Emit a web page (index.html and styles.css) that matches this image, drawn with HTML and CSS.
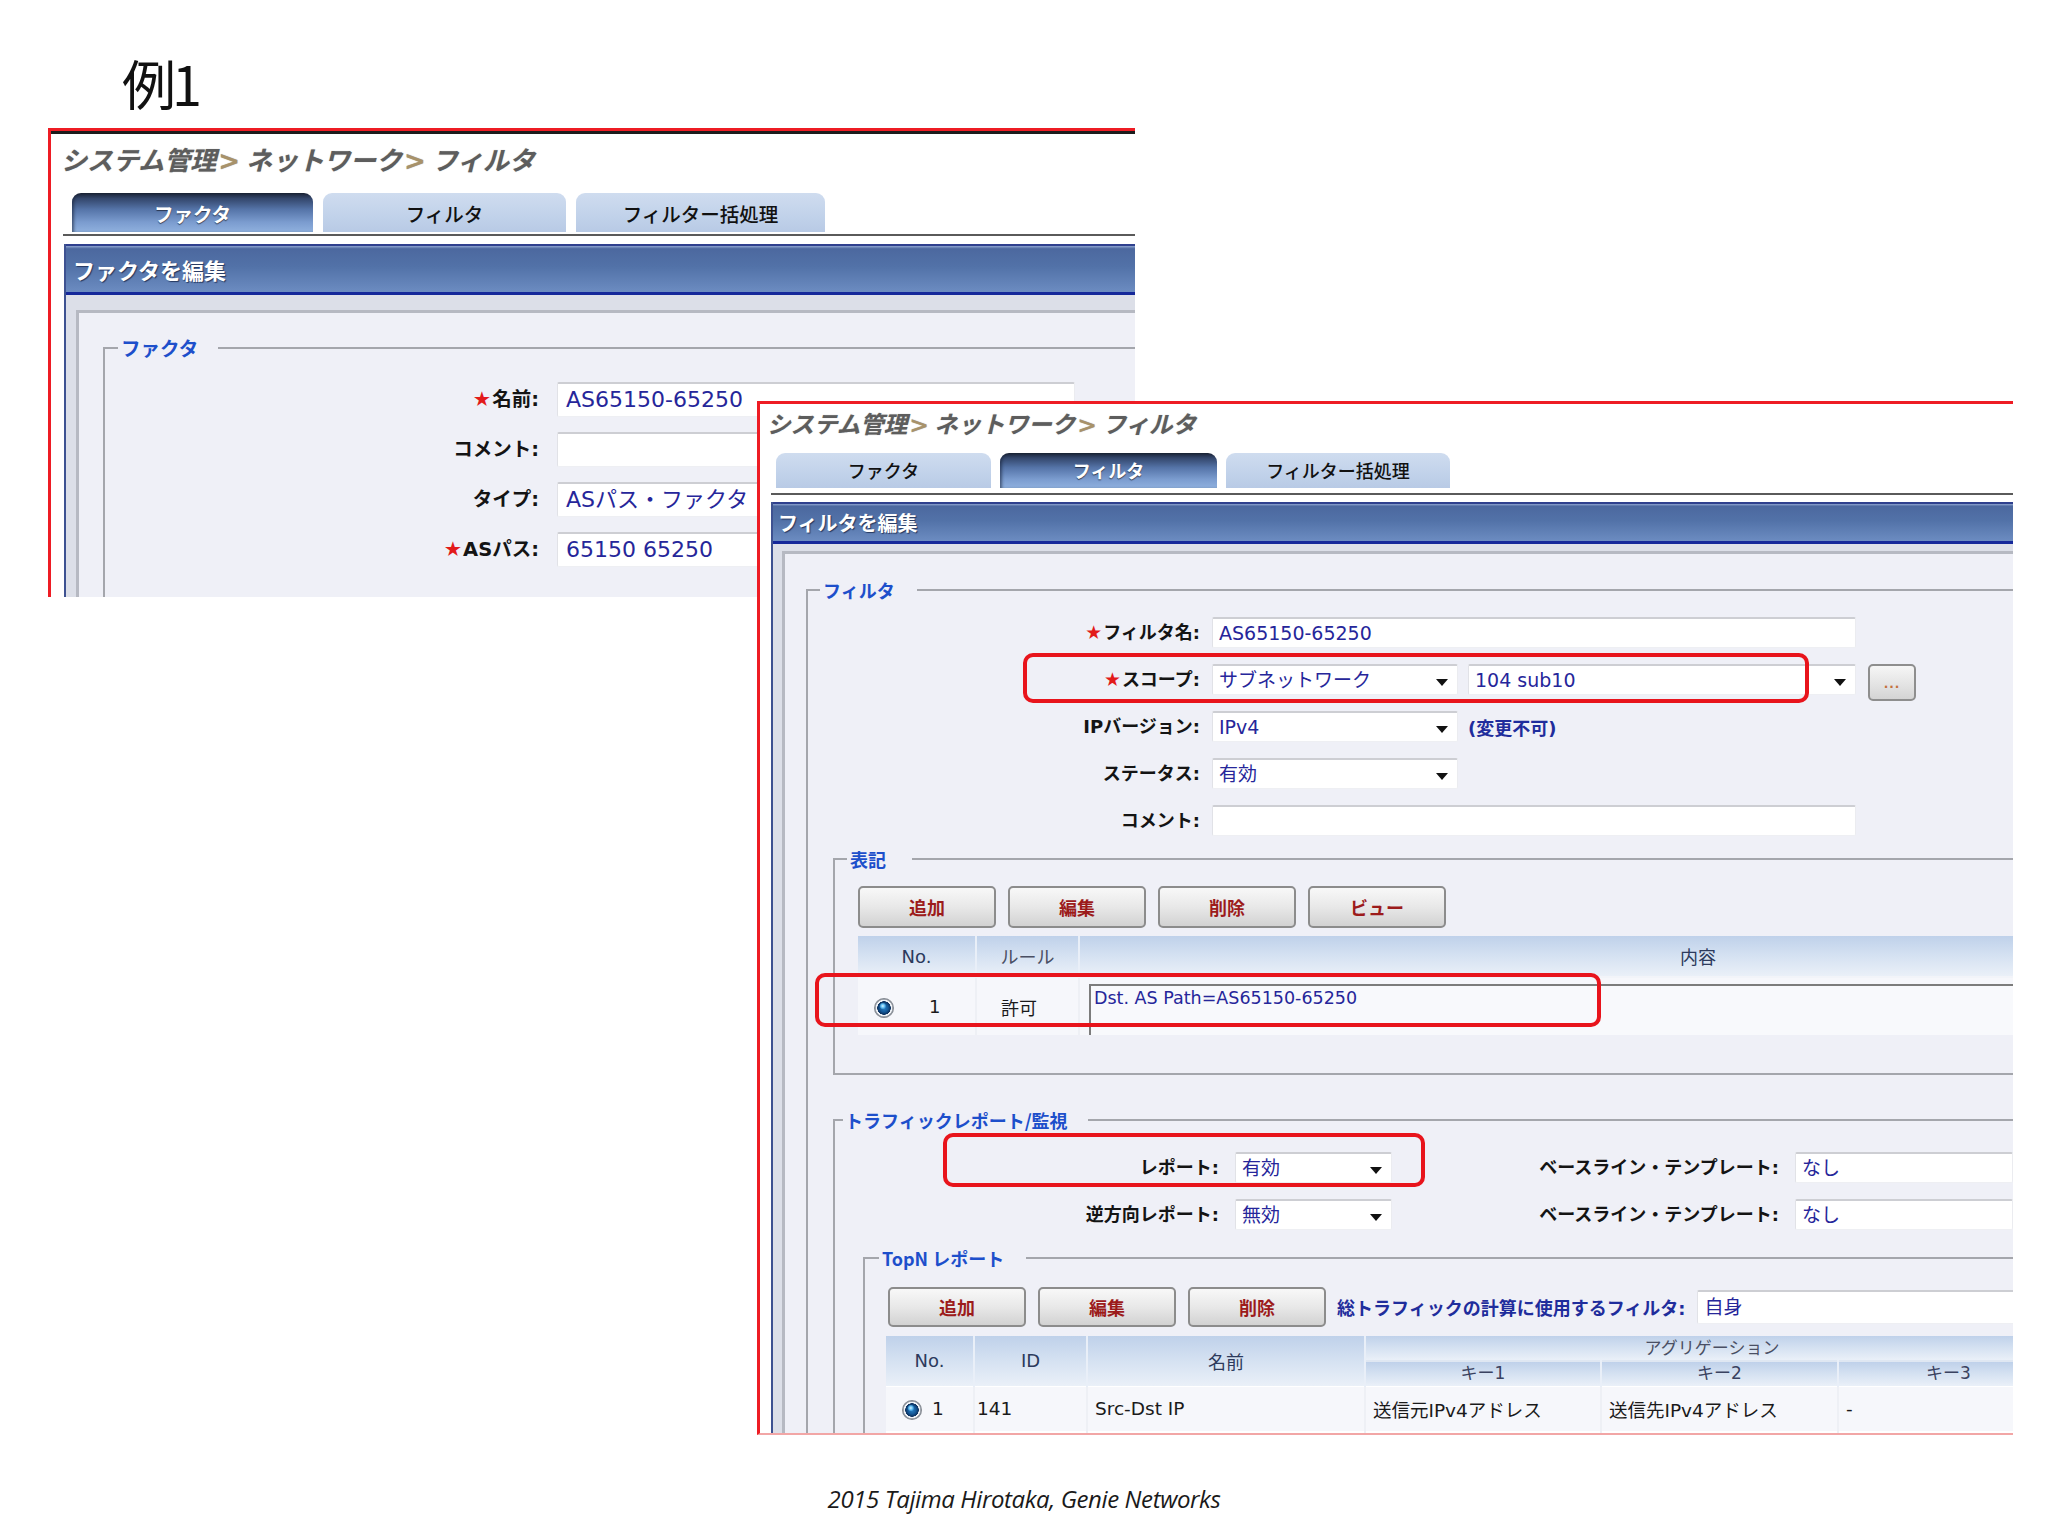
FILE: index.html
```html
<!DOCTYPE html>
<html lang="ja">
<head>
<meta charset="utf-8">
<title>例1</title>
<link rel="stylesheet" href="styles.css">
</head>
<body>
<div class="slide">
  <h1 class="slide-title">例1</h1>

  <div class="shot shot1">
    <div class="app">
      <div class="crumb">システム管理<span class="sep">&gt;</span> ネットワーク<span class="sep">&gt;</span> フィルタ</div>
      <div class="tabs">
        <div class="tab active t1">ファクタ</div>
        <div class="tab t2">フィルタ</div>
        <div class="tab t3">フィルター括処理</div>
      </div>
      <div class="panel">
        <div class="panel-head">ファクタを編集</div>
        <div class="panel-body">
          <div class="inner">
            <fieldset class="fs fs-factor">
              <legend>ファクタ</legend>
              <div class="form">
                <div class="lbl"><span class="req">★</span>名前:</div>
                <div class="input">AS65150-65250</div>
                <div class="lbl">コメント:</div>
                <div class="input"></div>
                <div class="lbl">タイプ:</div>
                <div class="input">ASパス・ファクタ</div>
                <div class="lbl"><span class="req">★</span>ASパス:</div>
                <div class="input">65150 65250</div>
              </div>
            </fieldset>
          </div>
        </div>
      </div>
    </div>
  </div>

  <div class="shot shot2">
    <div class="app">
      <div class="crumb">システム管理<span class="sep">&gt;</span> ネットワーク<span class="sep">&gt;</span> フィルタ</div>
      <div class="tabs">
        <div class="tab t1">ファクタ</div>
        <div class="tab active t2">フィルタ</div>
        <div class="tab t3">フィルター括処理</div>
      </div>
      <div class="panel">
        <div class="panel-head">フィルタを編集</div>
        <div class="panel-body">
          <div class="inner">
            <fieldset class="fs fs-main">
              <legend>フィルタ</legend>
              <div class="form">
                <div class="lbl"><span class="req">★</span>フィルタ名:</div>
                <div class="ctrl"><div class="input w-full">AS65150-65250</div></div>

                <div class="lbl"><span class="req">★</span>スコープ:</div>
                <div class="ctrl">
                  <div class="input select w-sel"><span>サブネットワーク</span><span class="caret"></span></div>
                  <div class="input select w-sel2"><span>104 sub10</span><span class="caret"></span></div>
                  <div class="dots-btn">...</div>
                </div>

                <div class="lbl">IPバージョン:</div>
                <div class="ctrl">
                  <div class="input select w-sel"><span>IPv4</span><span class="caret"></span></div>
                  <span class="note">(変更不可)</span>
                </div>

                <div class="lbl">ステータス:</div>
                <div class="ctrl"><div class="input select w-sel"><span>有効</span><span class="caret"></span></div></div>

                <div class="lbl">コメント:</div>
                <div class="ctrl"><div class="input w-full"></div></div>
              </div>

              <fieldset class="fs fs-notation">
                <legend>表記</legend>
                <div class="fs-content">
                  <div class="btn-row">
                    <div class="btn">追加</div>
                    <div class="btn">編集</div>
                    <div class="btn">削除</div>
                    <div class="btn">ビュー</div>
                  </div>
                  <table class="grid grid-rules">
                    <colgroup><col class="c-no"><col class="c-rule"><col class="c-body"></colgroup>
                    <thead>
                      <tr><th>No.</th><th class="th-rule">ルール</th><th>内容</th></tr>
                    </thead>
                    <tbody>
                      <tr>
                        <td class="td-sel"><span class="radio"></span><span class="num">1</span></td>
                        <td class="td-rule">許可</td>
                        <td class="td-body"><div class="expr">Dst. AS Path=AS65150-65250</div></td>
                      </tr>
                    </tbody>
                  </table>
                </div>
              </fieldset>

              <fieldset class="fs fs-traffic">
                <legend>トラフィックレポート/監視</legend>
                <div class="report-grid">
                  <div class="lbl">レポート:</div>
                  <div class="input select"><span>有効</span><span class="caret"></span></div>
                  <div class="lbl">ベースライン・テンプレート:</div>
                  <div class="input">なし</div>

                  <div class="lbl">逆方向レポート:</div>
                  <div class="input select"><span>無効</span><span class="caret"></span></div>
                  <div class="lbl">ベースライン・テンプレート:</div>
                  <div class="input">なし</div>
                </div>

                <fieldset class="fs fs-topn">
                  <legend>TopN レポート</legend>
                  <div class="fs-content">
                    <div class="btn-row">
                      <div class="btn">追加</div>
                      <div class="btn">編集</div>
                      <div class="btn">削除</div>
                      <span class="note total-lbl">総トラフィックの計算に使用するフィルタ:</span>
                      <div class="input total-input">自身</div>
                    </div>
                    <table class="grid grid-topn">
                      <colgroup>
                        <col class="k-no"><col class="k-id"><col class="k-name">
                        <col class="k-k1"><col class="k-k2"><col class="k-k3">
                      </colgroup>
                      <thead>
                        <tr>
                          <th rowspan="2">No.</th><th rowspan="2">ID</th><th rowspan="2">名前</th>
                          <th colspan="3" class="th-agg">アグリゲーション</th>
                        </tr>
                        <tr class="sub"><th>キー1</th><th>キー2</th><th>キー3</th></tr>
                      </thead>
                      <tbody>
                        <tr>
                          <td class="td-sel"><span class="radio"></span><span class="num">1</span></td>
                          <td class="td-id">141</td>
                          <td>Src-Dst IP</td>
                          <td>送信元IPv4アドレス</td>
                          <td>送信先IPv4アドレス</td>
                          <td>-</td>
                        </tr>
                        <tr class="blank"><td></td><td></td><td></td><td></td><td></td><td></td></tr>
                      </tbody>
                    </table>
                  </div>
                </fieldset>
              </fieldset>
            </fieldset>
          </div>
        </div>
      </div>
    </div>
    <div class="hl hl-scope"></div>
    <div class="hl hl-rule"></div>
    <div class="hl hl-report"></div>
  </div>

  <p class="credit">2015 Tajima Hirotaka, Genie Networks</p>
</div>
</body>
</html>
```

FILE: styles.css
```css
* { box-sizing: border-box; }
html, body { margin: 0; padding: 0; background: #fff; }
body {
  width: 2048px;
  height: 1536px;
  overflow: hidden;
  font-family: "DejaVu Sans", "Noto Sans CJK JP", sans-serif;
  color: #111;
}

.slide {
  position: relative;
  width: 2048px;
  height: 1536px;
  display: flex;
  flex-direction: column;
}

.slide-title {
  margin: 52px 0 0 122px;
  font: 400 54px/62px "Noto Sans CJK JP", sans-serif;
  letter-spacing: -4px;
  color: #111;
}

.credit {
  margin: auto 0 0;
  padding-bottom: 23px;
  text-align: center;
  font: italic 400 24px/28px "Open Sans", sans-serif;
  letter-spacing: -0.4px;
  color: #1a1a1a;
}

/* ---------- screenshot frames ---------- */
.shot {
  position: absolute;
  overflow: hidden;
  background: #fff;
  border-left: 3px solid #ee1c24;
  border-top: 3px solid #ee1c24;
}
.shot1 { left: 48px; top: 128px; width: 1087px; height: 469px; z-index: 1; }
.shot2 { left: 757px; top: 401px; width: 1256px; height: 1034px; z-index: 2; border-bottom: 2px solid #f2a6a6; }

.shot1 .app { border-top: 3px solid #1c1c1c; }

/* breadcrumb */
.crumb {
  font-family: "Noto Sans CJK JP", sans-serif;
  font-weight: 700;
  font-style: italic;
  color: #5d5d5d;
  white-space: nowrap;
  text-shadow: 0 0 1px #aaa;
}
.crumb .sep { color: #a8926a; margin-left: 2px; font-family: "DejaVu Sans", sans-serif; }
.shot1 .crumb { margin: 10px 0 0 10px; font-size: 26px; line-height: 30px; }
.shot2 .crumb { margin: 5px 0 0 7px; font-size: 23.5px; line-height: 28px; }

/* tabs */
.tabs {
  display: flex;
  border-bottom: 2px solid #5a5a5a;
}
.shot1 .tabs { margin: 17px 0 0 12px; padding: 0 0 2px 9px; gap: 10px; }
.shot2 .tabs { margin: 14px 0 0 11px; padding: 0 0 5px 5px; gap: 9px; }

.tab {
  border-radius: 9px 9px 0 0;
  background: linear-gradient(180deg, #cfdcef 0%, #c1d2ea 60%, #b8cae5 100%);
  color: #111;
  text-align: center;
  font-family: "Noto Sans CJK JP", sans-serif;
  font-weight: 500;
}
.tab.active {
  background: linear-gradient(180deg, #1a2233 0%, #33466b 14%, #5574a8 42%, #7b9ccf 75%, #8fb0de 100%);
  color: #fff;
  font-weight: 700;
  text-shadow: 0 1px 1px #2a3650;
  box-shadow: inset 3px 0 3px -1px rgba(20, 30, 50, 0.55);
}
.shot1 .tab { height: 39px; line-height: 41px; font-size: 19.5px; }
.shot1 .t1 { width: 241px; }
.shot1 .t2 { width: 243px; }
.shot1 .t3 { width: 249px; }
.shot2 .tab { height: 35px; line-height: 35px; font-size: 18px; }
.shot2 .t1 { width: 215px; }
.shot2 .t2 { width: 217px; }
.shot2 .t3 { width: 224px; }

/* panel */
.panel { border-left: 2px solid #3e5291; }
.shot1 .panel { margin: 8px 0 0 13px; }
.shot2 .panel { margin: 7px 0 0 11px; }

.panel-head {
  border-top: 2px solid #2f408e;
  border-bottom: 3px solid #15289a;
  background: linear-gradient(180deg, #8ea4d0 0, #4c689f 6%, #5272a8 45%, #6c8cc1 100%);
  color: #fff;
  font-family: "Noto Sans CJK JP", sans-serif;
  font-weight: 700;
  text-shadow: 1px 1px 1px #25375f;
  white-space: nowrap;
}
.shot1 .panel-head { height: 51px; line-height: 46px; font-size: 22px; padding-left: 7px; }
.shot2 .panel-head { height: 42px; line-height: 37px; font-size: 20px; padding-left: 5px; }

.panel-body { background: #dcdfe8; }
.shot1 .panel-body { padding: 15px 0 0 10px; }
.shot2 .panel-body { padding: 7px 0 0 9px; }

.inner {
  background: #eff0f7;
  border-top: 3px solid #b6b9c2;
  border-left: 3px solid #b6b9c2;
  min-height: 900px;
}
.shot1 .inner { padding: 23px 0 0 24px; }
.shot2 .inner { padding: 25px 0 0 21px; }

/* fieldsets */
.fs {
  margin: 0;
  padding: 0;
  min-width: 0;
  border-style: solid;
  border-color: #a4a6ac;
  border-width: 2px 0 0 2px;
}
.fs > legend {
  font-family: "Noto Sans CJK JP", sans-serif;
  font-weight: 700;
  color: #1d4fcb;
  white-space: nowrap;
}
.fs-factor > legend { font-size: 19.5px; line-height: 24px; margin-left: 13px; padding: 0 20px 0 3px; }
.fs-factor { padding-top: 22px; min-height: 400px; }

.fs-main > legend { font-size: 18px; line-height: 22px; margin-left: 12px; padding: 0 22px 0 3px; }
.fs-main { padding-top: 16px; }

.fs-notation { margin: 12px 0 0 25px; border-bottom-width: 2px; padding: 16px 0 38px 0; }
.fs-notation > legend { font-size: 18px; line-height: 22px; margin-left: 12px; padding: 0 26px 0 3px; }
.fs-notation > .fs-content { padding-left: 23px; }

.fs-traffic { margin: 34px 0 0 25px; padding: 21px 0 0 0; }
.fs-traffic > legend { font-size: 18px; line-height: 22px; margin-left: 8px; padding: 0 20px 0 2px; }

.fs-topn { margin: 17px 0 0 28px; padding: 18px 0 0 0; min-height: 300px; }
.fs-topn > legend { font-size: 18px; line-height: 22px; margin-left: 14px; padding: 0 22px 0 3px; }
.fs-topn > .fs-content { padding-left: 23px; }

/* form rows */
.form { display: grid; }
.shot1 .form { grid-template-columns: 434px 518px; column-gap: 18px; row-gap: 15px; grid-auto-rows: 35px; }
.shot2 .form { grid-template-columns: 392px 1fr; column-gap: 12px; row-gap: 16px; grid-auto-rows: 31px; }

.lbl {
  text-align: right;
  font-weight: 700;
  color: #141414;
  white-space: nowrap;
}
.shot1 .lbl { font-size: 19.5px; line-height: 35px; }
.shot2 .lbl { font-size: 18px; line-height: 31px; }
.req {
  color: #e21a1a;
  margin-right: 1px;
  font-family: "DejaVu Sans", sans-serif;
  font-weight: 400;
  font-size: 1.05em;
  vertical-align: 0;
}

.input {
  background: #fff;
  border-top: 2px solid #cdced3;
  border-left: 1px solid #e1e2e7;
  border-right: 1px solid #ebecf0;
  border-bottom: 1px solid #eeeff3;
  border-radius: 2px;
  color: #26269a;
  white-space: nowrap;
  overflow: hidden;
}
.shot1 .input { font-size: 22px; line-height: 32px; padding-left: 8px; }
.shot2 .input { font-size: 19px; line-height: 28px; padding-left: 6px; height: 31px; }

.ctrl { display: flex; align-items: center; gap: 10px; }
.w-full { width: 644px; }
.w-sel { width: 246px; }
.w-sel2 { width: 388px; }

.select {
  display: flex;
  justify-content: space-between;
  align-items: center;
  padding-right: 9px;
}
.caret {
  width: 0;
  height: 0;
  border-left: 6px solid transparent;
  border-right: 6px solid transparent;
  border-top: 7px solid #111;
  margin-top: 4px;
  flex: none;
}

.dots-btn {
  align-self: flex-start;
  width: 48px;
  height: 37px;
  margin-left: 2px;
  border: 2px solid #8e8e8e;
  border-radius: 5px;
  background: linear-gradient(180deg, #f6f6f6 0%, #e4e4e4 55%, #d4d4d4 100%);
  color: #c4703c;
  font-size: 12px;
  font-weight: 700;
  line-height: 36px;
  text-align: center;
  letter-spacing: 1px;
}

.note {
  font-family: "DejaVu Sans", "Noto Sans CJK JP", sans-serif;
  font-weight: 700;
  color: #1f2d9c;
  font-size: 18px;
  white-space: nowrap;
}

/* buttons */
.btn-row { display: flex; align-items: center; gap: 12px; }
.btn {
  width: 138px;
  border: 2px solid #8c8c8c;
  border-radius: 5px;
  background: linear-gradient(180deg, #f8f8f8 0%, #e8e8e8 50%, #d2d2d2 100%);
  color: #9c1b1b;
  font-family: "Noto Sans CJK JP", sans-serif;
  font-weight: 700;
  font-size: 18px;
  text-align: center;
  flex: none;
}
.fs-notation .btn { height: 42px; line-height: 38px; }
.fs-topn .btn { height: 40px; line-height: 36px; }

.total-lbl { margin-left: -1px; }
.shot2 .total-input { flex: 1; margin-left: 0; height: 34px; line-height: 31px; min-width: 400px; }

/* tables */
.grid {
  border-collapse: collapse;
  table-layout: fixed;
  font-size: 18px;
}
.grid th {
  background: linear-gradient(180deg, #bfd1ea 0%, #d3e0f1 45%, #eaf0f8 100%);
  color: #2c3a5c;
  font-weight: 400;
  text-align: center;
  border-right: 2px solid #e9eff8;
  font-family: "DejaVu Sans", "Noto Sans CJK JP", sans-serif;
  padding: 0;
}
.grid td {
  background: #f6f7fb;
  color: #1a1a1a;
  padding: 0;
  white-space: nowrap;
  vertical-align: middle;
  border-right: 2px solid #eef0f5;
}

.grid-rules { width: 1460px; margin-top: 8px; }
.c-no { width: 118px; }
.c-rule { width: 103px; }
.grid-rules th { height: 41px; border-bottom: 2px solid #f2f4f9; }
.grid-rules .th-rule { color: #4a4f63; }
.grid-rules td { height: 57px; }
.td-sel { padding-left: 16px !important; }
.grid-rules .num { margin-left: 35px; }
.td-rule { padding-left: 24px !important; font-family: "Noto Sans CJK JP", sans-serif; }
.td-body { vertical-align: top !important; padding: 6px 0 0 9px !important; }
.expr {
  height: 51px;
  border-top: 2px solid #7c7c7c;
  border-left: 2px solid #7c7c7c;
  padding: 1px 0 0 3px;
  color: #26269a;
  font-size: 17.5px;
  line-height: 22px;
  background: #f8f9fc;
}

.radio {
  display: inline-block;
  width: 20px;
  height: 20px;
  border-radius: 50%;
  vertical-align: middle;
  background:
    radial-gradient(circle at 44% 40%, #d6f4ff 0, #5cbaf0 2px, rgba(60, 150, 220, 0) 3.5px),
    radial-gradient(circle, #2a80c4 0, #155a9a 4px, #0b305e 6.5px, #f1f4f8 7px, #f1f4f8 8px, #a0a5ad 8.5px, #737981 10px);
}

.grid-topn { width: 1173px; margin-top: 9px; margin-left: -2px; }
.k-no { width: 88px; }
.k-id { width: 113px; }
.k-name { width: 278px; }
.k-k1 { width: 236px; }
.k-k2 { width: 237px; }
.k-k3 { width: 221px; }
.grid-topn thead tr:first-child th { height: 25px; }
.grid-topn thead th[rowspan] { height: 50px; }
.grid-topn .th-agg { color: #4a4f63; font-size: 17px; line-height: 23px; }
.grid-topn .sub th { height: 25px; border-top: 2px solid #dfe7f2; font-size: 17px; line-height: 23px; color: #3a4260; }
.grid-topn td { height: 46px; padding-left: 7px; font-size: 18.5px; border-top: 1px solid #fff; }
.grid-topn .td-sel { padding-left: 16px !important; }
.grid-topn .num { margin-left: 10px; }
.grid-topn .td-id { padding-left: 2px; }
.grid-topn .blank td { border-top: 2px solid #fff; height: 40px; }

/* traffic rows */
.report-grid {
  display: grid;
  grid-template-columns: 384px 157px 371px 1fr;
  column-gap: 16px;
  row-gap: 16px;
  grid-auto-rows: 31px;
}

/* annotation highlights */
.hl {
  position: absolute;
  border: 4px solid #e8141c;
  border-radius: 10px;
  pointer-events: none;
}
.hl-scope { left: 263px; top: 249px; width: 786px; height: 50px; }
.hl-rule { left: 55px; top: 569px; width: 786px; height: 54px; }
.hl-report { left: 183px; top: 729px; width: 482px; height: 54px; }
```
